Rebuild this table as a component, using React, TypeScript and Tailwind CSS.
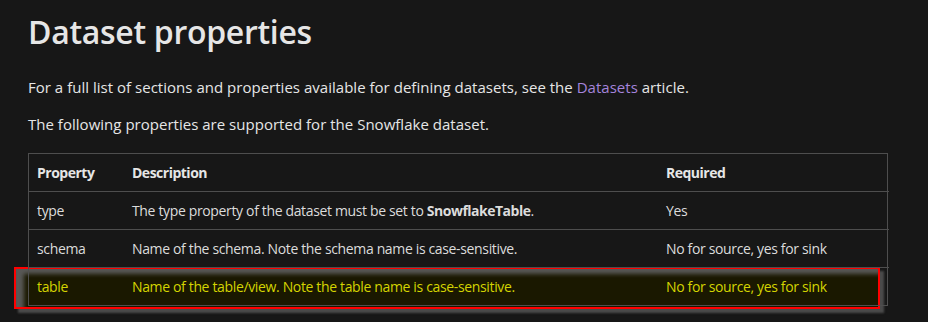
const rows = [
  { name: "type", desc: "type", required: "Yes" },
  { name: "schema", desc: "schema", required: "No for source, yes for sink" },
  { name: "table", desc: "table", required: "No for source, yes for sink" },
];

function Desc({ kind }: { kind: string }) {
  if (kind === "type")
    return (
      <>
        The type property of the dataset must be set to{" "}
        <b className="font-bold tracking-[-0.5px]">SnowflakeTable</b>.
      </>
    );
  if (kind === "schema") return <>Name of the schema. Note the schema name is case-sensitive.</>;
  return <>Name of the table/view. Note the table name is case-sensitive.</>;
}

export default function App() {
  return (
    <div className="h-[322px] w-full overflow-hidden bg-[#171717] pl-[28px] pt-[12px] font-['Open_Sans',sans-serif] text-[#e6e6e6]">
      <h1 className="text-[32px] leading-[40px] font-semibold tracking-[-0.3px] text-[#e6e6e6]">Dataset properties</h1>
      <p className="mt-[24px] text-[15px] leading-[22px] tracking-[0.02px]">
        For a full list of sections and properties available for defining datasets, see the{" "}
        <span className="text-[#a584dc]">Datasets</span> article.
      </p>
      <p className="mt-[15px] text-[15px] leading-[22px] tracking-[0.02px]">
        The following properties are supported for the Snowflake dataset.
      </p>

      <div className="relative mt-[18px] w-[860px]">
        <div className="absolute left-[-14px] top-[114px] h-[42px] w-[866px] border-[2.5px] border-[#ff0000] bg-[#1a1800] shadow-[inset_8px_5px_4px_rgba(95,95,95,0.9),4px_4px_2px_rgba(80,80,80,0.9)]" />
        <div className="relative grid grid-cols-[95px_534px_231px] border border-[#4e4e4e] text-[14px] tracking-[-0.35px]">
          <div className="flex h-[38px] items-center border-b border-[#4e4e4e] pl-[8px] font-bold tracking-[-0.5px]">Property</div>
          <div className="flex h-[38px] items-center border-b border-[#4e4e4e] pl-[8px] font-bold tracking-[-0.5px]">Description</div>
          <div className="flex h-[38px] items-center border-b border-[#4e4e4e] pl-[8px] font-bold tracking-[-0.5px]">Required</div>
          {rows.map((r, i) => {
            const hl = i === rows.length - 1;
            const cell = hl
              ? "flex h-[37px] items-center pl-[8px] text-[#d4d400]"
              : "flex h-[38px] items-center border-b border-[#4e4e4e] pl-[8px] text-[#dcdcdc]";
            return (
              <div key={r.name} className="contents">
                <div className={cell}>{r.name}</div>
                <div className={cell}>
                  <span>
                    <Desc kind={r.desc} />
                  </span>
                </div>
                <div className={cell}>{r.required}</div>
              </div>
            );
          })}
        </div>
      </div>
    </div>
  );
}
